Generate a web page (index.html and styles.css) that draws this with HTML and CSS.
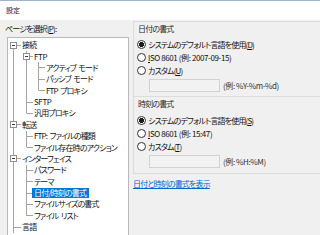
FILE: index.html
```html
<!DOCTYPE html>
<html lang="ja">
<head>
<meta charset="utf-8">
<title>設定</title>
<link rel="stylesheet" href="styles.css">
</head>
<body>
<div class="window">
  <div class="titlebar">設定</div>
  <div class="content">
    <div class="left">
      <div class="page-label">ページを選択(<u>P</u>):</div>
      <div class="tree">
        <div class="row"><span class="g x down"><span class="box"></span></span><span class="text">接続</span></div>
        <div class="row"><span class="g v"></span><span class="g x both"><span class="box"></span></span><span class="text lat">FTP</span></div>
        <div class="row"><span class="g v"></span><span class="g v"></span><span class="g t"></span><span class="text">アクティブ モード</span></div>
        <div class="row"><span class="g v"></span><span class="g v"></span><span class="g t"></span><span class="text">パッシブ モード</span></div>
        <div class="row"><span class="g v"></span><span class="g v"></span><span class="g l"></span><span class="text">FTP プロキシ</span></div>
        <div class="row"><span class="g v"></span><span class="g t"></span><span class="text lat">SFTP</span></div>
        <div class="row"><span class="g v"></span><span class="g l"></span><span class="text">汎用プロキシ</span></div>
        <div class="row"><span class="g x both"><span class="box"></span></span><span class="text">転送</span></div>
        <div class="row"><span class="g v"></span><span class="g t"></span><span class="text">FTP: ファイルの種類</span></div>
        <div class="row"><span class="g v"></span><span class="g l"></span><span class="text">ファイル存在時のアクション</span></div>
        <div class="row"><span class="g x both"><span class="box"></span></span><span class="text">インターフェイス</span></div>
        <div class="row"><span class="g v"></span><span class="g t"></span><span class="text">パスワード</span></div>
        <div class="row"><span class="g v"></span><span class="g t"></span><span class="text">テーマ</span></div>
        <div class="row"><span class="g v"></span><span class="g t"></span><span class="text selected">日付/時刻の書式</span></div>
        <div class="row"><span class="g v"></span><span class="g t"></span><span class="text">ファイルサイズの書式</span></div>
        <div class="row"><span class="g v"></span><span class="g l"></span><span class="text">ファイル リスト</span></div>
        <div class="row"><span class="g t"></span><span class="text">言語</span></div>
      </div>
    </div>
    <div class="right">
      <div class="group">
        <div class="legend">日付の書式</div>
        <div class="options">
          <div class="radio-row"><span class="radio checked"></span><span>システムのデフォルト言語を使用(<u>D</u>)</span></div>
          <div class="radio-row"><span class="radio"></span><span class="lat"><u>I</u>SO 8601 (例: 2007-09-15)</span></div>
          <div class="radio-row"><span class="radio"></span><span>カスタム(<u>U</u>)</span></div>
        </div>
        <div class="custom-row"><span class="input"></span><span class="example lat">(例: %Y-%m-%d)</span></div>
      </div>
      <div class="group group-time">
        <div class="legend">時刻の書式</div>
        <div class="options">
          <div class="radio-row"><span class="radio checked"></span><span>システムのデフォルト言語を使用(<u>S</u>)</span></div>
          <div class="radio-row"><span class="radio"></span><span class="lat"><u>I</u>SO 8601 (例: 15:47)</span></div>
          <div class="radio-row"><span class="radio"></span><span>カスタム(<u>T</u>)</span></div>
        </div>
        <div class="custom-row"><span class="input"></span><span class="example lat">(例: %H:%M)</span></div>
      </div>
      <a class="link" href="#">日付と時刻の書式を表示</a>
    </div>
  </div>
</div>
</body>
</html>
```
FILE: styles.css
```css
:root {
  --ln: #a3a3a3;
}
* { box-sizing: border-box; }
html, body {
  margin: 0;
  padding: 0;
}
body {
  width: 320px;
  height: 235px;
  overflow: hidden;
  background: #f0f0f0;
  font-family: "Noto Sans CJK JP", "Noto Sans", sans-serif;
  font-size: 8px;
  font-feature-settings: "palt";
  letter-spacing: -0.85px;
  color: #111;
}
.lat { letter-spacing: -0.4px; }
.window {
  width: 320px;
  height: 235px;
  overflow: hidden;
}
.titlebar {
  height: 20px;
  background: #fff;
  border-top: 1px solid #9fb4c9;
  padding-left: 6px;
  font-size: 7px;
  letter-spacing: 0;
  line-height: 18px;
  color: #222;
}
.content {
  display: flex;
  align-items: flex-start;
}
.left {
  flex: 0 0 133px;
}
.page-label {
  margin: 3px 0 0 5px;
  height: 12px;
  line-height: 12px;
}
.page-label u, .radio-row u { text-decoration: underline; text-underline-offset: 1px; }
.tree {
  margin: 2px 0 0 7px;
  width: 122px;
  height: 220px;
  background: #fff;
  border: 1px solid #b9b9b9;
  padding-top: 1.5px;
}
.row {
  display: flex;
  height: 11.375px;
}
.g {
  flex: 0 0 12px;
  height: 100%;
}
.row > .g:first-child { flex-basis: 13px; }
.g.v {
  background: linear-gradient(var(--ln), var(--ln)) 5px 0 / 1px 100% no-repeat;
}
.g.t {
  background:
    linear-gradient(var(--ln), var(--ln)) 5px 0 / 1px 100% no-repeat,
    linear-gradient(var(--ln), var(--ln)) 6px 50% / 100% 1px no-repeat;
}
.g.l {
  background:
    linear-gradient(var(--ln), var(--ln)) 5px 0 / 1px 50% no-repeat,
    linear-gradient(var(--ln), var(--ln)) 6px 50% / 100% 1px no-repeat;
}
.g.x {
  display: flex;
  align-items: center;
  padding-left: 2px;
}
.g.x.down {
  background:
    linear-gradient(var(--ln), var(--ln)) 5px 100% / 1px 50% no-repeat,
    linear-gradient(var(--ln), var(--ln)) 6px 50% / 100% 1px no-repeat;
}
.g.x.both {
  background:
    linear-gradient(var(--ln), var(--ln)) 5px 0 / 1px 100% no-repeat,
    linear-gradient(var(--ln), var(--ln)) 6px 50% / 100% 1px no-repeat;
}
.box {
  width: 7px;
  height: 7px;
  border: 1px solid #8e8f8f;
  background: linear-gradient(#3a3a3a, #3a3a3a) center / 3px 1px no-repeat, #fff;
}
.text {
  align-self: center;
  padding: 0 1px;
  height: 10px;
  line-height: 10px;
  white-space: nowrap;
  word-spacing: 1.5px;
}
.text.selected {
  margin-left: -1px;
  padding: 0 3px 0 2px;
  background: #0078d7;
  color: #fff;
}
.right {
  flex: 0 0 220px;
  margin-top: 1px;
}
.group {
  border: 1px solid #dcdcdc;
  padding: 1px 0 4px 3px;
}
.group + .group { margin-top: -1px; }
.legend {
  margin-left: 1px;
  height: 12px;
  line-height: 12px;
  color: #2a2a2a;
}
.options {
  margin-top: 3px;
}
.group-time .options { margin-top: 4px; }
.group-time { padding-bottom: 5px; }
.radio-row {
  display: flex;
  align-items: center;
  height: 13px;
  white-space: nowrap;
}
.radio {
  flex: 0 0 9px;
  height: 9px;
  border: 1px solid #333;
  border-radius: 50%;
  background: #fff;
  margin-right: 2px;
}
.radio.checked {
  background: radial-gradient(circle, #1c1c1c 0 2.3px, #fff 2.8px);
}
.custom-row {
  display: flex;
  align-items: center;
  margin-top: 2px;
  padding-left: 12px;
}
.input {
  width: 71px;
  height: 13px;
  border: 1px solid #d2d2d2;
  background: #f2f2f2;
}
.example {
  margin-left: 3px;
  color: #333;
}
.link {
  display: inline-block;
  margin-top: 4px;
  height: 12px;
  line-height: 12px;
  color: #0066cc;
  text-decoration: underline;
}
```
